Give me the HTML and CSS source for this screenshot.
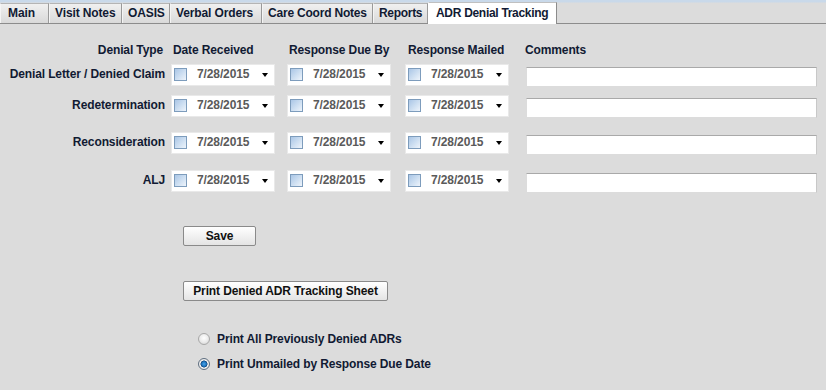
FILE: index.html
```html
<!DOCTYPE html>
<html>
<head>
<meta charset="utf-8">
<link rel="stylesheet" href="styles.css">
</head>
<body>
<div class="tabbar">
  <div class="tab t-main">Main</div>
  <div class="tab t-visit">Visit Notes</div>
  <div class="tab t-oasis">OASIS</div>
  <div class="tab t-verbal">Verbal Orders</div>
  <div class="tab t-care">Care Coord Notes</div>
  <div class="tab t-reports">Reports</div>
  <div class="tab active t-adr">ADR Denial Tracking</div>
</div>
<div class="panel">
  <div class="row head">
    <div class="lbl">Denial Type</div>
    <div class="hc c1">Date Received</div>
    <div class="hc c2">Response Due By</div>
    <div class="hc c3">Response Mailed</div>
    <div class="hc c4">Comments</div>
  </div>

  <div class="row r1">
    <div class="lbl">Denial Letter / Denied Claim</div>
    <div class="date c1"><span class="chk"></span><span class="dtxt">7/28/2015</span><span class="arrow"></span></div>
    <div class="date c2"><span class="chk"></span><span class="dtxt">7/28/2015</span><span class="arrow"></span></div>
    <div class="date c3"><span class="chk"></span><span class="dtxt">7/28/2015</span><span class="arrow"></span></div>
    <div class="comment c4"></div>
  </div>

  <div class="row r2">
    <div class="lbl">Redetermination</div>
    <div class="date c1"><span class="chk"></span><span class="dtxt">7/28/2015</span><span class="arrow"></span></div>
    <div class="date c2"><span class="chk"></span><span class="dtxt">7/28/2015</span><span class="arrow"></span></div>
    <div class="date c3"><span class="chk"></span><span class="dtxt">7/28/2015</span><span class="arrow"></span></div>
    <div class="comment c4"></div>
  </div>

  <div class="row r3">
    <div class="lbl">Reconsideration</div>
    <div class="date c1"><span class="chk"></span><span class="dtxt">7/28/2015</span><span class="arrow"></span></div>
    <div class="date c2"><span class="chk"></span><span class="dtxt">7/28/2015</span><span class="arrow"></span></div>
    <div class="date c3"><span class="chk"></span><span class="dtxt">7/28/2015</span><span class="arrow"></span></div>
    <div class="comment c4"></div>
  </div>

  <div class="row r4">
    <div class="lbl">ALJ</div>
    <div class="date c1"><span class="chk"></span><span class="dtxt">7/28/2015</span><span class="arrow"></span></div>
    <div class="date c2"><span class="chk"></span><span class="dtxt">7/28/2015</span><span class="arrow"></span></div>
    <div class="date c3"><span class="chk"></span><span class="dtxt">7/28/2015</span><span class="arrow"></span></div>
    <div class="comment c4"></div>
  </div>

  <div class="btn save">Save</div>
  <div class="btn print">Print Denied ADR Tracking Sheet</div>

  <div class="radios">
    <div class="radio-row"><span class="radio"></span><span>Print All Previously Denied ADRs</span></div>
    <div class="radio-row second"><span class="radio on"></span><span>Print Unmailed by Response Due Date</span></div>
  </div>
</div>
</body>
</html>
```
FILE: styles.css
```css
html, body {
  margin: 0;
  padding: 0;
  background: #dcdcdc;
  font-family: "Liberation Sans", Arial, sans-serif;
  font-size: 12px;
  font-weight: bold;
  letter-spacing: -0.12px;
  color: #111a33;
}

.tabbar {
  display: flex;
  align-items: flex-end;
  height: 23px;
  border-bottom: 1px solid #8c8c8c;
  background: linear-gradient(#c9d9ea 0, #c9d9ea 2px, #dcdcdc 3px);
}

.tab {
  box-sizing: border-box;
  flex: none;
  height: 20px;
  line-height: 19px;
  padding: 0 0 0 5px;
  border-left: 1px solid #f4f4f4;
  border-right: 1px solid #9a9a9a;
  border-top: 1px solid #b4b4b4;
  background: linear-gradient(#f0f0f0, #d9d9d9);
  white-space: nowrap;
  overflow: hidden;
}

.t-main { width: 49px; padding-left: 7px; }
.t-visit { width: 73px; }
.t-oasis { width: 48px; }
.t-verbal { width: 92px; }
.t-care { width: 111px; letter-spacing: -0.2px; }
.t-reports { width: 55px; letter-spacing: -0.3px; }

.tab.active {
  width: 129px;
  height: 22px;
  margin-bottom: -1px;
  line-height: 20px;
  padding-left: 7px;
  letter-spacing: -0.3px;
  background: #ffffff;
  border-left: 1px solid #ffffff;
  border-right: 1px solid #8c8c8c;
  border-top: 1px solid #c0c0c0;
  position: relative;
  z-index: 1;
}

.panel {
  padding-top: 19px;
  height: 347px;
}

.row {
  display: flex;
  align-items: center;
  height: 22px;
}

.row.head {
  height: 14px;
  line-height: 14px;
}

.r1 { margin-top: 7px; }
.r2 { margin-top: 9px; }
.r3 { margin-top: 15px; }
.r4 { margin-top: 16px; }

.lbl {
  width: 165px;
  text-align: right;
  margin-right: 6px;
  line-height: 14px;
  padding-bottom: 2px;
  white-space: nowrap;
}

.row.head .lbl {
  padding-bottom: 0;
  width: 163px;
  margin-right: 8px;
}

.c1, .c2, .c3 { width: 104px; flex: none; }
.c2 { margin-left: 12px; }
.c3 { margin-left: 14px; }
.c4 { margin-left: 17px; width: 291px; flex: none; }

.hc { box-sizing: border-box; white-space: nowrap; }
.hc.c1 { padding-left: 2px; }
.hc.c2 { padding-left: 2px; }
.hc.c3 { padding-left: 3px; }
.hc.c4 { margin-left: 16px; }

.date {
  box-sizing: border-box;
  height: 22px;
  background: #ffffff;
  border: 1px solid #e9e9e9;
  display: flex;
  align-items: center;
  padding-bottom: 1px;
}

.chk {
  box-sizing: border-box;
  width: 13px;
  height: 13px;
  margin-left: 2px;
  border: 1px solid #7d9cbc;
  background: linear-gradient(135deg, #aac6e6 0%, #cfe0f2 55%, #eef4fb 100%);
}

.dtxt {
  margin-left: 10px;
  color: #5a5a5a;
  line-height: 14px;
  padding-bottom: 2px;
}

.arrow {
  margin-left: auto;
  margin-right: 6px;
  width: 0;
  height: 0;
  border-left: 3px solid transparent;
  border-right: 3px solid transparent;
  border-top: 4px solid #000000;
}

.comment {
  box-sizing: border-box;
  align-self: flex-start;
  margin-top: 3px;
  height: 20px;
  background: #ffffff;
  border: 1px solid #dcdcdc;
  border-top-color: #a9a9a9;
  border-right-color: #c8c8c8;
}

.btn {
  box-sizing: border-box;
  height: 20px;
  line-height: 18px;
  margin-left: 183px;
  text-align: center;
  color: #111111;
  background: linear-gradient(#ffffff, #e4e4e4);
  border: 1px solid #8a8a8a;
  border-radius: 2px;
}

.save {
  width: 73px;
  margin-top: 34px;
}

.print {
  width: 205px;
  margin-top: 35px;
}

.radios {
  margin-left: 198px;
  margin-top: 31px;
}

.radio-row {
  display: flex;
  align-items: center;
  height: 14px;
  line-height: 14px;
  color: #111a33;
}

.radio-row.second {
  margin-top: 11px;
}

.radio {
  box-sizing: border-box;
  width: 12px;
  height: 12px;
  border-radius: 50%;
  border: 1px solid #a8a8a8;
  background: radial-gradient(circle at 50% 40%, #ffffff 0%, #ececec 50%, #d0d0d0 100%);
  margin-right: 7px;
  flex: none;
}

.radio.on {
  border: 1px solid #5f6f80;
  background: radial-gradient(circle at 50% 50%, #49a6ec 0, #1b6fb8 2.5px, #0f3f70 3.2px, #f2f2f2 3.8px, #d6d6d6 100%);
}
```
